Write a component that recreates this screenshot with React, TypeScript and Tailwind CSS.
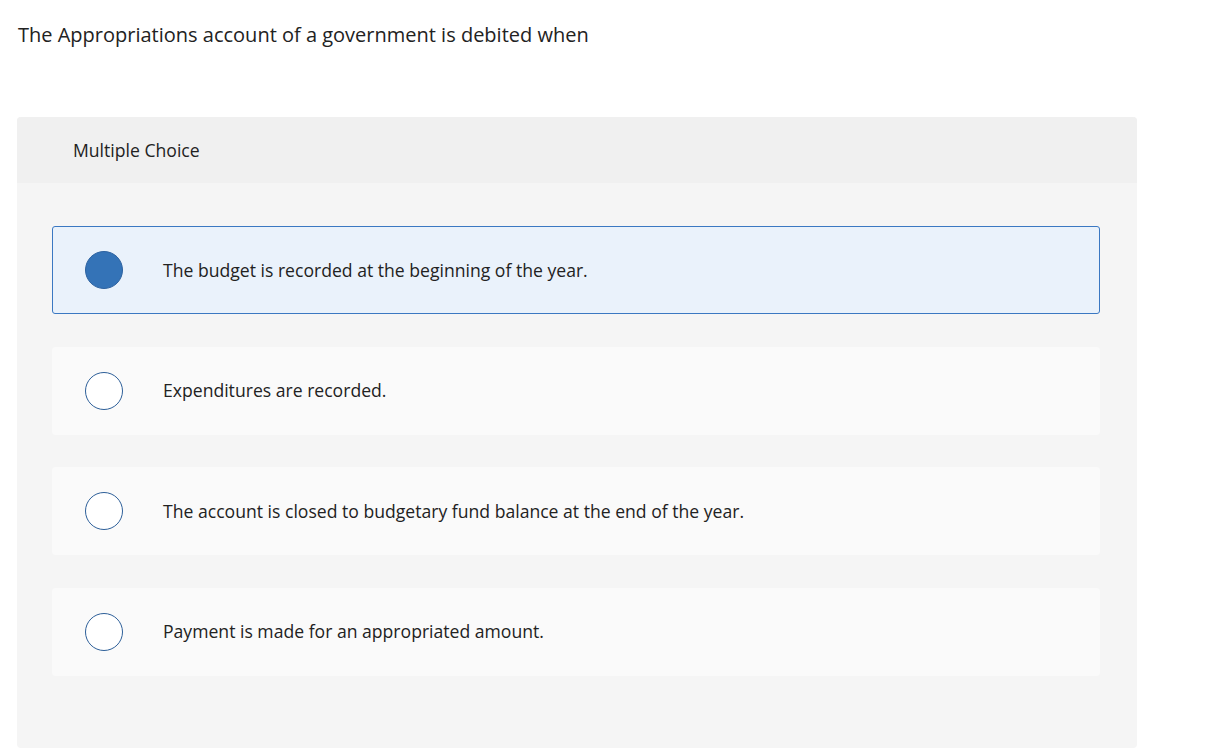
import React from "react";

const options = [
  "The budget is recorded at the beginning of the year.",
  "Expenditures are recorded.",
  "The account is closed to budgetary fund balance at the end of the year.",
  "Payment is made for an appropriated amount.",
];

export default function App() {
  return (
    <div className="min-h-[752px] bg-white pt-[21px] pl-[17px] text-[#222]" style={{ fontFamily: "'Open Sans', sans-serif" }}>
      <h1 className="ml-[1px] text-[20px] leading-[27px] font-normal">The Appropriations account of a government is debited when</h1>
      <div className="mt-[69px] w-[1120px] overflow-hidden rounded-[4px] bg-[#f5f5f5]">
        <div className="flex h-[66px] items-center bg-[#f0f0f0] pl-[56px] text-[17.6px]">Multiple Choice</div>
        <div className="flex flex-col gap-[32.5px] pt-[43px] pb-[72px] pl-[35px] pr-[37px]">
          {options.map((o, i) => {
            const sel = i === 0;
            return (
              <div
                key={i}
                className={
                  sel
                    ? "flex h-[88px] items-center rounded-[3px] border border-[#3b78c2] bg-[#eaf2fb]"
                    : "flex h-[88px] items-center rounded-[4px] bg-[#fafafa]"
                }
              >
                <div
                  className={
                    sel
                      ? "ml-[32px] h-[38px] w-[38px] shrink-0 rounded-full border border-[#2d62a0] bg-[#3473b7]"
                      : "ml-[33px] h-[38px] w-[38px] shrink-0 rounded-full border border-[#2d5f99] bg-white"
                  }
                />
                <span className="ml-[40px] text-[17.6px]">{o}</span>
              </div>
            );
          })}
        </div>
      </div>
    </div>
  );
}
